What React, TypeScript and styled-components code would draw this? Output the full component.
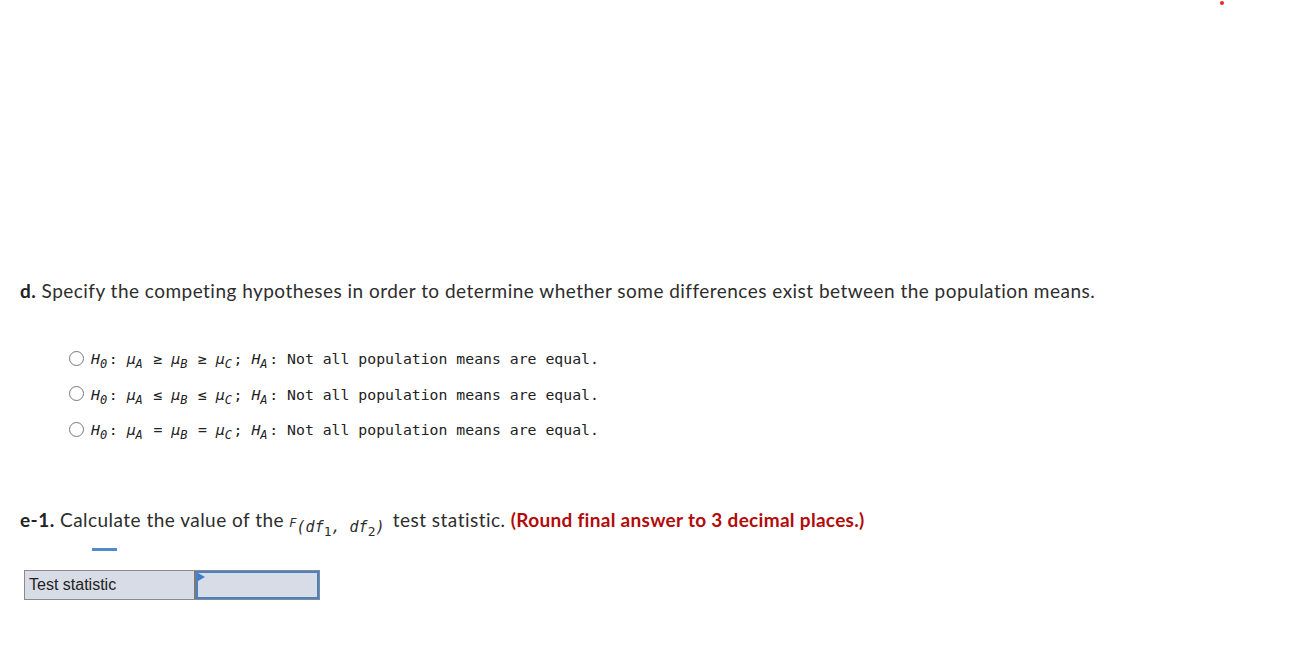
import styled, { createGlobalStyle } from "styled-components"

const Global = createGlobalStyle`
  body {
    margin: 0;
    background: #fff;
    color: #333;
    font-family: Lato, "Open Sans", sans-serif;
  }
`

const Page = styled.div`
  position: relative;
  width: 1301px;
  height: 662px;
  padding: 278px 0 0 20px;
  box-sizing: border-box;
`

const Dot = styled.div`
  position: absolute;
  left: 1220px;
  top: 1px;
  width: 4px;
  height: 4px;
  border-radius: 50%;
  background: #e8262b;
`

const Prompt = styled.p`
  margin: 0;
  font-size: 19px;
  letter-spacing: 0.47px;
  line-height: 26px;
  color: #2d2d2d;
`

const Label = styled.b`
  font-weight: 700;
  color: #222;
`

const Warn = styled.b`
  color: #b20b0b;
  font-weight: 700;
  letter-spacing: 0.3px;
`

const Options = styled.div`
  display: flex;
  flex-direction: column;
  gap: 10.5px;
  margin: 44px 0 0 49px;
`

const Option = styled.label`
  display: flex;
  align-items: center;
  gap: 7px;
  height: 25px;
`

const Radio = styled.span`
  width: 13px;
  height: 13px;
  border: 1px solid #777;
  border-radius: 50%;
  margin-top: -5px;
  background: #fff;
`

const Math = styled.span`
  font-family: "DejaVu Sans Mono", "Liberation Mono", monospace;
  font-size: 14.8px;
  color: #222;
  white-space: pre;
`

const Var = styled.i`
  font-style: italic;
`

const Sub = styled.span`
  display: inline-block;
  width: 8.9px;
  font-size: 12px;
  font-style: italic;
  vertical-align: -4px;
`

const FSymbol = styled.span`
  font-family: "DejaVu Sans Mono", "Liberation Mono", monospace;
  font-style: italic;
  font-size: 12px;
  letter-spacing: 0;
`

const FArgs = styled.span`
  display: inline-block;
  font-family: "DejaVu Sans Mono", "Liberation Mono", monospace;
  font-style: italic;
  font-size: 15px;
  line-height: 15px;
  letter-spacing: 0;
  vertical-align: -5px;
  margin-right: 3px;
`

const ArgSub = styled.span`
  font-size: 13px;
  font-style: normal;
  vertical-align: -4px;
`

const Section = styled.div`
  margin-top: 63px;
`

const Dash = styled.div`
  width: 25px;
  height: 3px;
  background: #4f8ccf;
  margin: 9px 0 0 72px;
`

const Table = styled.div`
  display: flex;
  margin: 19px 0 0 4px;
  width: 296px;
  height: 30px;
  border: 1px solid #8a8a8a;
  box-sizing: border-box;
  background: #d8dce6;
`

const Cell = styled.div`
  width: 171px;
  border-right: 2px solid #7a7a7a;
  font-family: "Liberation Sans", Arial, sans-serif;
  font-size: 16px;
  color: #222;
  display: flex;
  align-items: center;
  padding-left: 4px;
  box-sizing: border-box;
`

const InputCell = styled.div`
  position: relative;
  flex: 1;
  border: 2px solid #4a80c4;
  background: #d8dce6;
`

const Flag = styled.div`
  position: absolute;
  left: 0;
  top: 0;
  width: 0;
  height: 0;
  border-top: 4px solid transparent;
  border-bottom: 4px solid transparent;
  border-left: 7px solid #3f7cc9;
`

const rels = ["≥", "≤", "="]

export default function App() {
  return (
    <>
      <Global />
      <Page>
        <Dot />
        <Prompt>
          <Label>d.</Label> Specify the competing hypotheses in order to determine whether some differences exist between the population means.
        </Prompt>
        <Options>
          {rels.map((r) => (
            <Option key={r}>
              <Radio />
              <Math>
                <Var>H</Var><Sub>0</Sub>: <Var>μ</Var><Sub>A</Sub> {r} <Var>μ</Var><Sub>B</Sub> {r} <Var>μ</Var><Sub>C</Sub>; <Var>H</Var><Sub>A</Sub>: Not all population means are equal.
              </Math>
            </Option>
          ))}
        </Options>
        <Section>
          <Prompt>
            <Label>e-1.</Label> Calculate the value of the <FSymbol>F</FSymbol>
            <FArgs>(df<ArgSub>1</ArgSub>, df<ArgSub>2</ArgSub>)</FArgs> test statistic. <Warn>(Round final answer to 3 decimal places.)</Warn>
          </Prompt>
          <Dash />
          <Table>
            <Cell>Test statistic</Cell>
            <InputCell>
              <Flag />
            </InputCell>
          </Table>
        </Section>
      </Page>
    </>
  )
}
